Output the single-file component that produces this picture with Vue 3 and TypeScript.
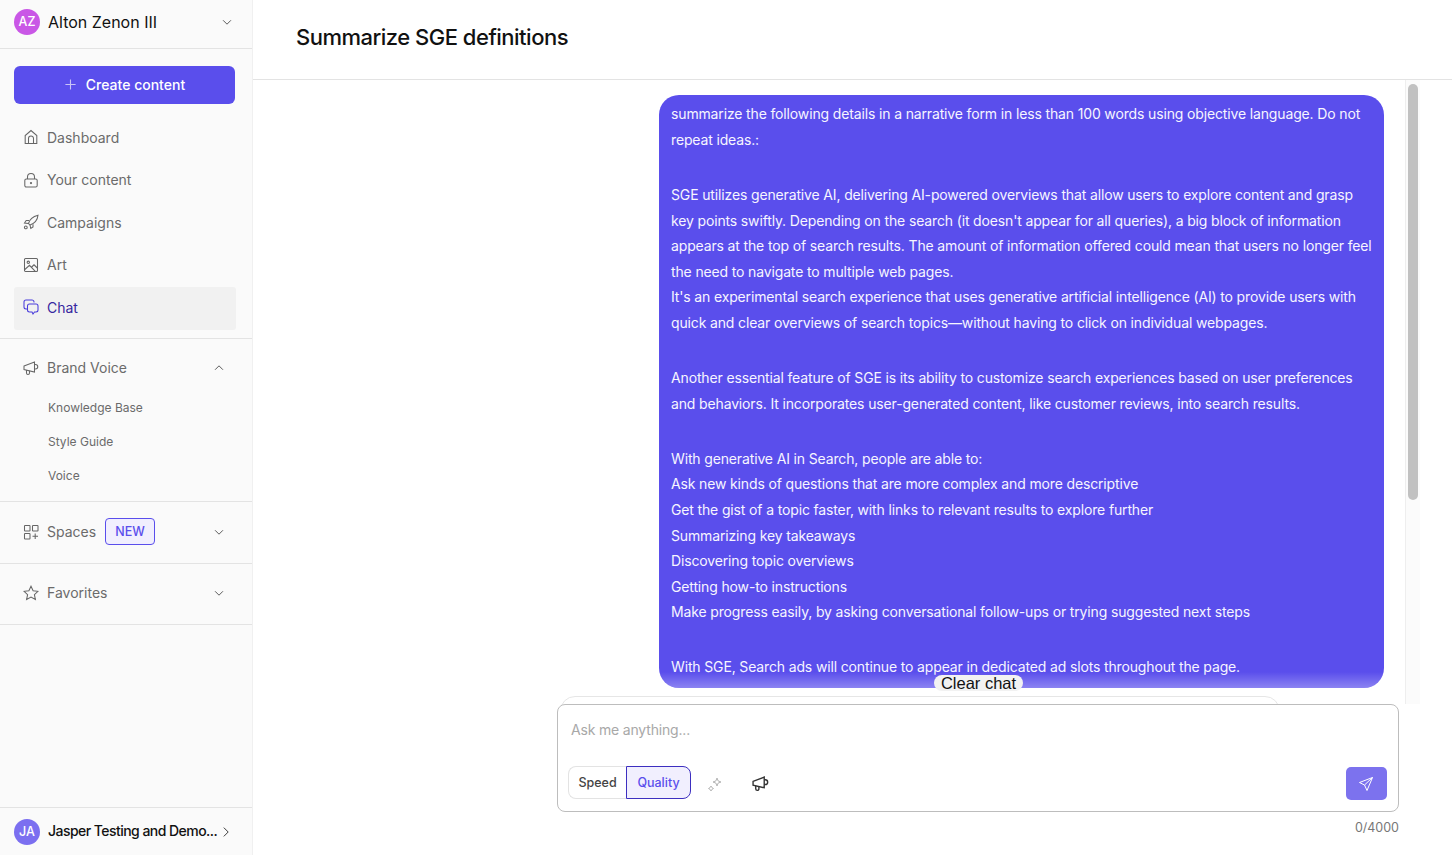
<script setup lang="ts">
interface NavItem {
  label: string;
  icon: string;
  active?: boolean;
}

const navItems: NavItem[] = [
  { label: "Dashboard", icon: "home" },
  { label: "Your content", icon: "lock" },
  { label: "Campaigns", icon: "rocket" },
  { label: "Art", icon: "image" },
  { label: "Chat", icon: "chat", active: true },
];

const voiceLinks = ["Knowledge Base", "Style Guide", "Voice"];

const paragraphs: string[][] = [
  [
    "summarize the following details in a narrative form in less than 100 words using objective language. Do not",
    "repeat ideas.:",
  ],
  [
    "SGE utilizes generative AI, delivering AI-powered overviews that allow users to explore content and grasp",
    "key points swiftly. Depending on the search (it doesn't appear for all queries), a big block of information",
    "appears at the top of search results. The amount of information offered could mean that users no longer feel",
    "the need to navigate to multiple web pages.",
    "It's an experimental search experience that uses generative artificial intelligence (AI) to provide users with",
    "quick and clear overviews of search topics—without having to click on individual webpages.",
  ],
  [
    "Another essential feature of SGE is its ability to customize search experiences based on user preferences",
    "and behaviors. It incorporates user-generated content, like customer reviews, into search results.",
  ],
  [
    "With generative AI in Search, people are able to:",
    "Ask new kinds of questions that are more complex and more descriptive",
    "Get the gist of a topic faster, with links to relevant results to explore further",
    "Summarizing key takeaways",
    "Discovering topic overviews",
    "Getting how-to instructions",
    "Make progress easily, by asking conversational follow-ups or trying suggested next steps",
  ],
  ["With SGE, Search ads will continue to appear in dedicated ad slots throughout the page."],
];
</script>

<template>
  <div class="app">
    <aside class="sidebar">
      <div class="account">
        <span class="avatar avatar-pink">AZ</span>
        <span class="account-name">Alton Zenon III</span>
        <svg class="chev account-chev" viewBox="0 0 16 16"><path d="M3.5 6l4.5 4.5L12.500 6" /></svg>
      </div>

      <div class="nav-section">
        <button class="create-btn">
          <svg class="plus" viewBox="0 0 14 14"><path d="M7 1.500v11M1.500 7h11" /></svg>
          Create content
        </button>
        <nav class="nav">
          <a v-for="item in navItems" :key="item.label" class="nav-item" :class="{ active: item.active }">
            <svg class="nav-icon" viewBox="0 0 16 16">
              <template v-if="item.icon === 'home'">
                <path d="M2.200 14.500V6.500L8 1.500l5.800 5v8z" />
                <path d="M5.500 14.500V9.500a2.500 2.500 0 0 1 5 0v5" />
              </template>
              <template v-else-if="item.icon === 'lock'">
                <rect x="1.800" y="7" width="12.400" height="8" rx="1.500" />
                <path d="M4.500 7V5a3.500 3.500 0 0 1 7 0v2" />
                <circle cx="8" cy="11" r=".6" />
              </template>
              <template v-else-if="item.icon === 'rocket'">
                <path d="M5.500 9.500C6.500 5.500 9.500 2.500 15 1.200 14.500 6.500 11 9.500 7 11z" />
                <path d="M6 6.500H3.200L1.500 9l3.800.6M10 10.200V13l-2.200 1.500-.8-3.500" />
                <circle cx="2.800" cy="13.400" r="1.400" />
              </template>
              <template v-else-if="item.icon === 'image'">
                <rect x="1.500" y="1.500" width="13" height="13" rx="1" />
                <circle cx="5.300" cy="5.300" r="1.200" />
                <path d="M1.800 12.500l4.700-4.200 5.800 6M8.700 10l2.300-2.200 3.300 3.200" />
              </template>
              <template v-else>
                <path d="M11 3.500V3a2 2 0 0 0-2-2H3a2 2 0 0 0-2 2v5a2 2 0 0 0 2 2h1" />
                <path d="M6.500 5h6.500a2 2 0 0 1 2 2v4a2 2 0 0 1-2 2h-1.500L10 15l-1-2H6.500a2 2 0 0 1-2-2V7a2 2 0 0 1 2-2z" />
              </template>
            </svg>
            {{ item.label }}
          </a>
        </nav>
      </div>

      <div class="voice-section">
        <div class="group-row">
          <svg class="nav-icon" viewBox="0 0 16 16">
            <path d="M1 6l10.500-4v10L1 9.500z" />
            <path d="M11.500 4.500h1a2.200 2.200 0 0 1 0 4.500h-1M3.500 10v3a1.500 1.500 0 0 0 3 0v-2.200" />
          </svg>
          <span>Brand Voice</span>
          <svg class="chev group-chev" viewBox="0 0 16 16"><path d="M3.500 10L8 5.500l4.500 4.500" /></svg>
        </div>
        <a v-for="link in voiceLinks" :key="link" class="sub-link">{{ link }}</a>
      </div>

      <div class="spaces-section">
        <div class="group-row">
          <svg class="nav-icon" viewBox="0 0 16 16">
            <rect x="1.500" y="1.500" width="5.500" height="5.500" rx=".6" />
            <rect x="9.500" y="1.500" width="5.500" height="5.500" rx=".6" />
            <rect x="1.500" y="9.500" width="5.500" height="5.500" rx=".6" />
            <path d="M12.200 9.500v5.500M9.500 12.200H15" />
          </svg>
          <span>Spaces</span>
          <span class="badge">NEW</span>
          <svg class="chev group-chev" viewBox="0 0 16 16"><path d="M3.500 6l4.500 4.500L12.500 6" /></svg>
        </div>
      </div>

      <div class="favorites-section">
        <div class="group-row">
          <svg class="nav-icon" viewBox="0 0 16 16">
            <path d="M8 1.200l2.100 4.500 4.900.6-3.600 3.300 1 4.900L8 12.100l-4.400 2.400 1-4.900L1 6.300l4.900-.6z" />
          </svg>
          <span>Favorites</span>
          <svg class="chev group-chev" viewBox="0 0 16 16"><path d="M3.500 6l4.500 4.500L12.500 6" /></svg>
        </div>
      </div>

      <div class="workspace">
        <span class="avatar avatar-violet">JA</span>
        <span class="workspace-name">Jasper Testing and Demo...</span>
        <svg class="chev workspace-chev" viewBox="0 0 16 16"><path d="M5.500 3l5 5-5 5" /></svg>
      </div>
    </aside>

    <main class="main">
      <header class="page-header">
        <h1>Summarize SGE definitions</h1>
      </header>

      <section class="chat-area">
        <div class="bubble">
          <p v-for="(para, i) in paragraphs" :key="i">
            <span v-for="line in para" :key="line" class="line">{{ line }}</span>
          </p>
          <div class="bubble-fade" />
        </div>
        <div class="scroll-track"><div class="scroll-thumb" /></div>
        <button class="clear-btn">Clear chat</button>
      </section>

      <section class="composer-wrap">
        <div class="composer-ghost" />
        <div class="composer">
          <div class="placeholder">Ask me anything...</div>
          <div class="composer-row">
            <div class="toggle">
              <span class="toggle-opt">Speed</span>
              <span class="toggle-opt selected">Quality</span>
            </div>
            <svg class="sparkle" viewBox="0 0 16 16">
              <path d="M10 2l1.100 2.900L14 6l-2.900 1.100L10 10 8.900 7.100 6 6l2.900-1.100z" />
              <path d="M4 10l.9 1.600 1.600.9-1.600.9L4 15l-.9-1.600-1.600-.9 1.600-.9z" />
            </svg>
            <svg class="megaphone" viewBox="0 0 16 16">
              <path d="M1 6l10.500-4v10L1 9.500z" />
              <path d="M11.500 4.500h1a2.200 2.200 0 0 1 0 4.500h-1M3.500 10v3a1.500 1.500 0 0 0 3 0v-2.200" />
            </svg>
            <button class="send-btn">
              <svg viewBox="0 0 16 16"><path d="M14.500 1.500L1.500 6.500l5 2.500 2.500 5.500zM6.500 9l8-7.500" /></svg>
            </button>
          </div>
        </div>
        <div class="counter">0/4000</div>
      </section>
    </main>
  </div>
</template>

<style>
html,
body {
  margin: 0;
  background: #fff;
}
</style>

<style scoped>
.app {
  display: flex;
  height: 855px;
  overflow: hidden;
  font-family: Inter, "Liberation Sans", sans-serif;
  color: #6b6b6b;
}
.sidebar {
  width: 252px;
  flex: none;
  display: flex;
  flex-direction: column;
  background: #fafafa;
  border-right: 1px solid #f0f0f0;
}
.account {
  height: 49px;
  flex: none;
  display: flex;
  align-items: center;
  padding: 0 14px 5px;
  box-sizing: border-box;
  border-bottom: 1px solid #e3e3e3;
}
.avatar {
  width: 26px;
  height: 26px;
  flex: none;
  border-radius: 50%;
  display: flex;
  align-items: center;
  justify-content: center;
  color: #fff;
  font-size: 12.500px;
  font-weight: 500;
}
.avatar-pink {
  background: #c957e6;
}
.avatar-violet {
  background: #7b6ff0;
}
.account-name {
  margin-left: 8px;
  font-size: 16px;
  color: #111;
}
.chev {
  fill: none;
  stroke: #555;
  stroke-width: 1.100;
  width: 14px;
  height: 14px;
}
.account-chev {
  margin-left: auto;
  margin-right: 4px;
}
.nav-section {
  padding: 17px 16px 8px 14px;
  border-bottom: 1px solid #e3e3e3;
}
.create-btn {
  width: 221px;
  height: 38px;
  padding: 0 0 2px;
  border: 0;
  border-radius: 6px;
  background: #5a4eec;
  color: #fff;
  font: 500 14px Inter, "Liberation Sans", sans-serif;
  display: flex;
  align-items: center;
  justify-content: center;
  gap: 9px;
}
.plus {
  width: 13px;
  height: 13px;
  fill: none;
  stroke: #c8c3f7;
  stroke-width: 1.200;
}
.nav {
  display: flex;
  flex-direction: column;
  margin-top: 13px;
}
.nav-item {
  height: 42.500px;
  box-sizing: border-box;
  display: flex;
  align-items: center;
  gap: 8px;
  padding: 0 0 2px 9px;
  font-size: 14px;
  border-radius: 3px;
}
.nav-item.active {
  background: #f1f1f1;
  color: #37279f;
}
.nav-item.active .nav-icon {
  stroke: #4a3ddb;
}
.nav-icon {
  width: 16px;
  height: 16px;
  flex: none;
  fill: none;
  stroke: #666;
  stroke-width: 1.050;
}
.voice-section {
  padding: 7px 0 8px;
  height: 163px;
  box-sizing: border-box;
  border-bottom: 1px solid #e3e3e3;
}
.group-row {
  height: 44px;
  display: flex;
  align-items: center;
  gap: 8px;
  padding-left: 23px;
  padding-right: 26px;
  font-size: 14px;
}
.group-chev {
  margin-left: auto;
}
.sub-link {
  display: flex;
  align-items: center;
  height: 34px;
  padding-left: 48px;
  font-size: 12px;
}
.voice-section .sub-link:first-of-type {
  margin-top: 1px;
}
.spaces-section {
  height: 62px;
  box-sizing: border-box;
  padding-top: 8px;
  border-bottom: 1px solid #e3e3e3;
}
.favorites-section {
  height: 61px;
  box-sizing: border-box;
  padding-top: 7px;
  border-bottom: 1px solid #e3e3e3;
}
.badge {
  width: 50px;
  height: 27px;
  margin-left: 1px;
  box-sizing: border-box;
  border: 1px solid #5a4eec;
  border-radius: 4px;
  background: #f1effe;
  color: #5a4eec;
  font-size: 12.500px;
  font-weight: 500;
  display: flex;
  align-items: center;
  justify-content: center;
}
.workspace {
  margin-top: auto;
  height: 48px;
  display: flex;
  align-items: center;
  padding: 0 14px;
  box-sizing: border-box;
  border-top: 1px solid #e3e3e3;
}
.workspace-name {
  margin-left: 8px;
  padding-bottom: 2px;
  font-size: 14px;
  font-weight: 500;
  letter-spacing: -0.54px;
  color: #111;
  white-space: nowrap;
}
.workspace-chev {
  margin-left: 2px;
  stroke: #333;
}
.main {
  flex: 1;
  display: flex;
  flex-direction: column;
  min-width: 0;
}
.page-header {
  height: 80px;
  flex: none;
  box-sizing: border-box;
  display: flex;
  align-items: center;
  padding: 0 0 6px 43px;
  border-bottom: 1px solid #e3e3e3;
}
.page-header h1 {
  margin: 0;
  font-size: 22px;
  font-weight: 500;
  letter-spacing: -0.5px;
  color: #111;
}
.chat-area {
  position: relative;
  height: 624px;
  flex: none;
  box-sizing: border-box;
  display: flex;
  align-items: flex-start;
  padding-left: 406px;
}
.bubble {
  position: relative;
  width: 725px;
  height: 593px;
  margin-top: 15px;
  box-sizing: border-box;
  padding: 6.400px 12px 0;
  overflow: hidden;
  border-radius: 20px;
  background: #5a4eec;
  color: #f6f5ff;
  font-size: 14px;
  letter-spacing: -0.145px;
  line-height: 25.550px;
}
.bubble p {
  margin: 0 0 29.700px;
}
.line {
  display: block;
  white-space: nowrap;
}
.bubble-fade {
  position: absolute;
  left: 0;
  right: 0;
  bottom: 0;
  height: 16px;
  background: linear-gradient(rgba(255, 255, 255, 0), rgba(255, 255, 255, 0.3));
}
.scroll-track {
  width: 15px;
  height: 624px;
  flex: none;
  margin-left: 21px;
  box-sizing: border-box;
  padding: 4px 2px 0 2px;
  border-left: 1px solid #eee;
  background: #fbfbfb;
}
.scroll-thumb {
  width: 10px;
  height: 416px;
  border-radius: 5px;
  background: #c1c1c1;
}
.clear-btn {
  position: absolute;
  left: 681px;
  top: 595px;
  width: 89px;
  height: 16px;
  padding: 0;
  border: 0;
  border-radius: 8px;
  background: #f2f2f2;
  color: #111;
  font: 16.500px/16px "Liberation Sans", sans-serif;
}
.composer-wrap {
  position: relative;
  margin-left: 304px;
  width: 842px;
}
.composer-ghost {
  position: absolute;
  left: 3px;
  top: -8px;
  width: 720px;
  height: 30px;
  box-sizing: border-box;
  border: 1px solid #e6e6e6;
  border-radius: 16px;
}
.composer {
  position: relative;
  height: 108px;
  box-sizing: border-box;
  padding: 15px 11px 0 10px;
  border: 1px solid #bdbdbd;
  border-radius: 8px;
  background: #fff;
}
.placeholder {
  padding-left: 3px;
  height: 20px;
  font-size: 14px;
  letter-spacing: -0.18px;
  line-height: 20px;
  color: #a8a8a8;
}
.composer-row {
  margin-top: 25px;
  display: flex;
  align-items: center;
}
.toggle {
  display: flex;
  height: 33px;
  font-size: 12.500px;
  font-weight: 500;
}
.toggle-opt {
  display: flex;
  align-items: center;
  justify-content: center;
  box-sizing: border-box;
  border: 1px solid #e3e3e3;
  border-right: 0;
  border-radius: 8px 0 0 8px;
  width: 58px;
  color: #444;
}
.toggle-opt.selected {
  width: 65px;
  border: 1px solid #3d2fc0;
  border-radius: 0 8px 8px 0;
  background: #f1effe;
  color: #5a4eec;
}
.sparkle {
  width: 16px;
  height: 16px;
  margin: 2px 0 0 16px;
  fill: none;
  stroke: #b5b5b5;
  stroke-width: 1;
}
.megaphone {
  width: 17px;
  height: 17px;
  margin: 2px 0 0 29px;
  fill: none;
  stroke: #333;
  stroke-width: 1.300;
}
.send-btn {
  margin: 2px 0 0 auto;
  width: 41px;
  height: 33px;
  padding: 0 2px 0 0;
  border: 0;
  border-radius: 5px;
  background: #7c72ee;
  display: flex;
  align-items: center;
  justify-content: center;
}
.send-btn svg {
  width: 16px;
  height: 16px;
  fill: none;
  stroke: #fff;
  stroke-width: 1;
  stroke-linejoin: round;
}
.counter {
  margin-top: 8px;
  text-align: right;
  font-size: 12.500px;
  line-height: 16px;
  color: #777;
}
</style>
